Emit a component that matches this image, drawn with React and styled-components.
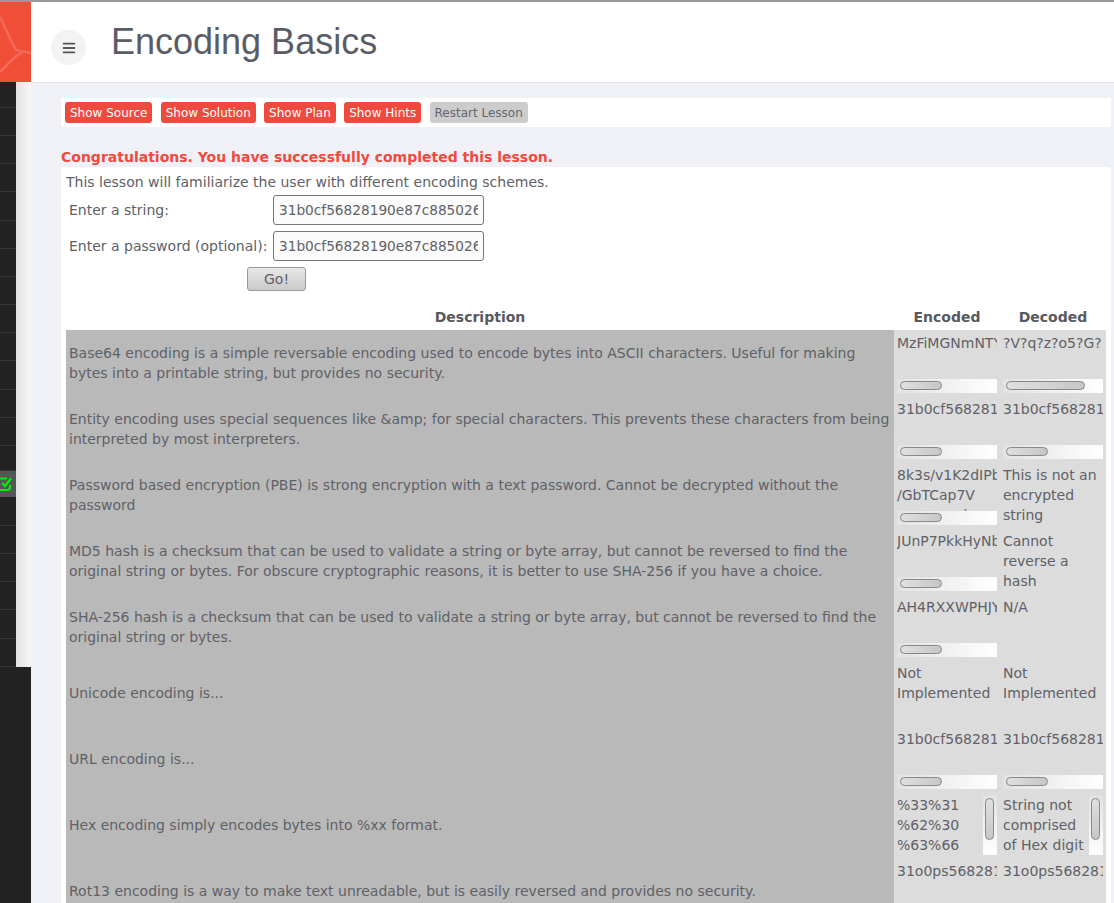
import React from "react";
import styled, { createGlobalStyle } from "styled-components";
import { FaBars } from "react-icons/fa";

const GlobalStyle = createGlobalStyle`
  html, body {
    margin: 0;
    height: 100%;
    overflow: hidden;
  }
  body {
    font-family: "DejaVu Sans", sans-serif;
    font-size: 14px;
    color: #606167;
    background: #eff1f6;
  }
`;

const Page = styled.div`
  display: flex;
  height: 903px;
  border-top: 2px solid #9a9a9a;
  box-sizing: border-box;
  overflow: hidden;
`;

const LeftColumn = styled.div`
  width: 31px;
  flex: none;
  display: flex;
  flex-direction: column;
`;

const Logo = styled.div`
  height: 80px;
  background: #f04e37;
  flex: none;
`;

const Rail = styled.div`
  display: flex;
  height: 585px;
  flex: none;
`;

const Sidebar = styled.div`
  width: 16px;
  background: #222;
`;

const SideRow = styled.div`
  height: ${({ $h }) => $h}px;
  box-sizing: border-box;
  border-bottom: ${({ $active }) => ($active ? "none" : "1px solid #363636")};
  background: ${({ $active }) => ($active ? "#555" : "transparent")};
  overflow: hidden;
  display: flex;
  align-items: center;
`;

const Gutter = styled.div`
  width: 15px;
  background: linear-gradient(to right, #e2e2e2, #f7f7f7);
`;

const RailFoot = styled.div`
  flex: 1;
  background: #222;
`;

const Main = styled.div`
  flex: 1;
  min-width: 0;
  display: flex;
  flex-direction: column;
`;

const Header = styled.div`
  height: 80px;
  flex: none;
  background: #fff;
  border-bottom: 1px solid #e3e5ea;
  display: flex;
  padding-left: 20px;
  gap: 25px;
`;

const MenuButton = styled.div`
  width: 35px;
  height: 35px;
  margin-top: 28px;
  border-radius: 50%;
  background: #f3f3f3;
  color: #555;
  display: flex;
  align-items: center;
  justify-content: center;
  font-size: 14px;
`;

const Title = styled.h1`
  margin: 17px 0 0;
  font-family: "Liberation Sans", Arial, sans-serif;
  font-size: 36px;
  font-weight: 400;
  line-height: 46px;
  color: #5a5c66;
`;

const Content = styled.div`
  flex: 1;
  padding: 15px 3px 0 30px;
  min-height: 0;
`;

const ButtonBar = styled.div`
  height: 29px;
  box-sizing: border-box;
  background: #fff;
  padding: 4px;
  display: flex;
  gap: 8.3px;
`;

const LessonButton = styled.div`
  height: 21px;
  padding: 0 5px;
  border-radius: 3px;
  background: ${({ $muted }) => ($muted ? "#cccccc" : "#ef4a3e")};
  color: ${({ $muted }) => ($muted ? "#66676d" : "#fff")};
  font-size: 12px;
  line-height: 23px;
  white-space: nowrap;
`;

const Congrats = styled.div`
  margin-top: 21px;
  height: 19px;
  line-height: 19px;
  color: #ef4a3e;
  font-weight: 700;
  font-size: 14px;
`;

const Panel = styled.div`
  background: #fff;
  padding: 5px 5px 0;
  border-radius: 3px 3px 0 0;
`;

const Intro = styled.div`
  line-height: 20px;
  height: 23px;
`;

const FormRow = styled.label`
  display: flex;
  align-items: center;
  height: 30px;
  margin-bottom: 6px;
  padding-left: 3px;
`;

const FieldLabel = styled.span`
  width: 204px;
  flex: none;
`;

const Field = styled.input`
  width: 211px;
  height: 30px;
  box-sizing: border-box;
  padding: 0 5px;
  border: 1px solid #777;
  border-radius: 3px;
  background: #fbfbfb;
  color: #606167;
  font: 13.7px "DejaVu Sans", sans-serif;
`;

const GoRow = styled.div`
  padding-left: 181px;
  height: 40px;
`;

const GoButton = styled.div`
  width: 59px;
  height: 24px;
  box-sizing: border-box;
  border: 1px solid #999;
  border-radius: 3px;
  background: linear-gradient(#e8e8e8, #c9c9c9);
  text-align: center;
  line-height: 22px;
`;

const Table = styled.table`
  width: 1040px;
  table-layout: fixed;
  border-collapse: collapse;
  border-spacing: 0;
`;

const HeadCell = styled.th`
  height: 23px;
  box-sizing: border-box;
  padding: 0 0 4px;
  font-weight: 700;
  font-size: 14px;
  color: #58595f;
  text-align: center;
  width: ${({ $w }) => $w || "auto"};
`;

const DescCell = styled.td`
  height: 66px;
  padding: 0 3px;
  background: #b9b9b9;
  line-height: 20px;
`;

const DataCell = styled.td`
  padding: 3px;
  background: #dcdcdc;
  vertical-align: top;
`;

const OutputBox = styled.div`
  position: relative;
  width: 100px;
  height: 60px;
  overflow: hidden;
  line-height: 20px;
  white-space: pre;
`;

const TrackX = styled.div`
  position: absolute;
  left: 0;
  right: 0;
  bottom: 0;
  height: 14px;
  background: linear-gradient(to right, #e2e2e2, #fff);
`;

const ThumbX = styled.div`
  position: absolute;
  left: 3px;
  top: 2px;
  width: ${({ $size }) => $size}px;
  height: 9px;
  box-sizing: border-box;
  border: 1px solid #888;
  border-radius: 5px;
  background: linear-gradient(to right, #e0e0e0, #c6c6c6);
`;

const TrackY = styled.div`
  position: absolute;
  top: 0;
  right: 0;
  bottom: 0;
  width: 14px;
  background: linear-gradient(#e2e2e2, #fff);
`;

const ThumbY = styled.div`
  position: absolute;
  top: 3px;
  left: 2px;
  width: 9px;
  height: 42px;
  box-sizing: border-box;
  border: 1px solid #888;
  border-radius: 5px;
  background: linear-gradient(#e0e0e0, #c6c6c6);
`;

const rows = [
  {
    desc: "Base64 encoding is a simple reversable encoding used to encode bytes into ASCII characters. Useful for making bytes into a printable string, but provides no security.",
    enc: { text: "MzFiMGNmNTY4MjgxOTBlODdj", bar: "x", size: 42 },
    dec: { text: "?V?q?z?o5?G?\u00a0?", bar: "x", size: 79 },
  },
  {
    desc: "Entity encoding uses special sequences like &amp; for special characters. This prevents these characters from being interpreted by most interpreters.",
    enc: { text: "31b0cf56828190e87c885026", bar: "x", size: 42 },
    dec: { text: "31b0cf56828190e87c885026", bar: "x", size: 42 },
  },
  {
    desc: "Password based encryption (PBE) is strong encryption with a text password. Cannot be decrypted without the password",
    enc: { text: "8k3s/v1K2dIPbXq\n/GbTCap7V\naneuoszxi", bar: "x", size: 42 },
    dec: { text: "This is not an\nencrypted\nstring" },
  },
  {
    desc: "MD5 hash is a checksum that can be used to validate a string or byte array, but cannot be reversed to find the original string or bytes. For obscure cryptographic reasons, it is better to use SHA-256 if you have a choice.",
    enc: { text: "JUnP7PkkHyNbQwe", bar: "x", size: 42 },
    dec: { text: "Cannot\nreverse a\nhash" },
  },
  {
    desc: "SHA-256 hash is a checksum that can be used to validate a string or byte array, but cannot be reversed to find the original string or bytes.",
    enc: { text: "AH4RXXWPHJYabcd", bar: "x", size: 42 },
    dec: { text: "N/A" },
  },
  {
    desc: "Unicode encoding is...",
    enc: { text: "Not\nImplemented" },
    dec: { text: "Not\nImplemented" },
  },
  {
    desc: "URL encoding is...",
    enc: { text: "31b0cf56828190e87c885026", bar: "x", size: 42 },
    dec: { text: "31b0cf56828190e87c885026", bar: "x", size: 42 },
  },
  {
    desc: "Hex encoding simply encodes bytes into %xx format.",
    enc: { text: "%33%31\n%62%30\n%63%66", bar: "y" },
    dec: { text: "String not\ncomprised\nof Hex digit", bar: "y" },
  },
  {
    desc: "Rot13 encoding is a way to make text unreadable, but is easily reversed and provides no security.",
    enc: { text: "31o0ps56828190r87p885026", bar: "x", size: 42 },
    dec: { text: "31o0ps56828190r87p885026", bar: "x", size: 42 },
  },
];

// lesson rows in the collapsed menu, the done lesson is a bit shorter
const sideRows = [
  26,
  ...Array(12).fill(338 / 12),
  25,
  26,
  29,
  ...Array(5).fill(28.2),
];
const doneRow = 14;

const LogoMark = () => (
  <svg width="31" height="80" viewBox="0 0 31 80">
    <path
      d="M0 15 C6 27 11 39 16 48 L31 51 M23 50 C15 53 8 62 0 70"
      fill="none"
      stroke="#fff"
      strokeOpacity="0.16"
      strokeWidth="2.6"
    />
  </svg>
);

const DoneIcon = () => (
  <svg width="12" height="14" viewBox="0 0 12 14" fill="none" stroke="#00f000" strokeWidth="2.2">
    <path d="M-3 1.5 H7 M10 8 V10 Q10 13 7 13 H-3" />
    <path d="M2 6 L5 9 L11 1.5" />
  </svg>
);

const Output = ({ text, bar, size }) => (
  <OutputBox>
    {text}
    {bar === "x" && (
      <TrackX>
        <ThumbX $size={size} />
      </TrackX>
    )}
    {bar === "y" && (
      <TrackY>
        <ThumbY />
      </TrackY>
    )}
  </OutputBox>
);

const App = () => {
  return (
    <>
      <GlobalStyle />
      <Page>
        <LeftColumn>
          <Logo>
            <LogoMark />
          </Logo>
          <Rail>
            <Sidebar>
              {sideRows.map((h, i) => (
                <SideRow key={i} $h={h} $active={i === doneRow}>
                  {i === doneRow && <DoneIcon />}
                </SideRow>
              ))}
            </Sidebar>
            <Gutter />
          </Rail>
          <RailFoot />
        </LeftColumn>
        <Main>
          <Header>
            <MenuButton>
              <FaBars />
            </MenuButton>
            <Title>Encoding Basics</Title>
          </Header>
          <Content>
            <ButtonBar>
              <LessonButton>Show Source</LessonButton>
              <LessonButton>Show Solution</LessonButton>
              <LessonButton>Show Plan</LessonButton>
              <LessonButton>Show Hints</LessonButton>
              <LessonButton $muted>Restart Lesson</LessonButton>
            </ButtonBar>
            <Congrats>Congratulations. You have successfully completed this lesson.</Congrats>
            <Panel>
              <Intro>This lesson will familiarize the user with different encoding schemes.</Intro>
              <FormRow>
                <FieldLabel>Enter a string:</FieldLabel>
                <Field readOnly value="31b0cf56828190e87c885026abcdef" />
              </FormRow>
              <FormRow>
                <FieldLabel>Enter a password (optional):</FieldLabel>
                <Field readOnly value="31b0cf56828190e87c885026abcdef" />
              </FormRow>
              <GoRow>
                <GoButton>Go!</GoButton>
              </GoRow>
              <Table>
                <thead>
                  <tr>
                    <HeadCell>Description</HeadCell>
                    <HeadCell $w="106px">Encoded</HeadCell>
                    <HeadCell $w="106px">Decoded</HeadCell>
                  </tr>
                </thead>
                <tbody>
                  {rows.map((row) => (
                    <tr key={row.desc}>
                      <DescCell>{row.desc}</DescCell>
                      <DataCell>
                        <Output {...row.enc} />
                      </DataCell>
                      <DataCell>
                        <Output {...row.dec} />
                      </DataCell>
                    </tr>
                  ))}
                </tbody>
              </Table>
            </Panel>
          </Content>
        </Main>
      </Page>
    </>
  );
};

export default App;
